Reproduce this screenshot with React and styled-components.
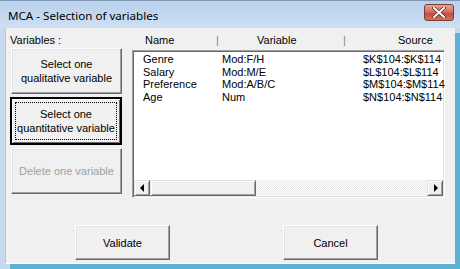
import React from 'react';
import styled, {createGlobalStyle} from 'styled-components';

const GlobalStyle = createGlobalStyle`
    html, body {
        margin: 0;
        padding: 0;
        background: #ffffff;
    }
    body {
        font-family: "Liberation Sans", Arial, sans-serif;
        font-size: 11px;
        color: #000;
    }
`

const rows = [
    {name: 'Genre', variable: 'Mod:F/H', source: '$K$104:$K$114'},
    {name: 'Salary', variable: 'Mod:M/E', source: '$L$104:$L$114'},
    {name: 'Preference', variable: 'Mod:A/B/C', source: '$M$104:$M$114'},
    {name: 'Age', variable: 'Num', source: '$N$104:$N$114'},
];

const CloseIcon = () => (
    <svg width="14" height="11" viewBox="0 0 14 11">
        <path d="M2 1 L12 10 M12 1 L2 10" stroke="#5a2a22" strokeWidth="3.6" strokeLinecap="square" />
        <path d="M2 1 L12 10 M12 1 L2 10" stroke="#ffffff" strokeWidth="2" strokeLinecap="square" />
    </svg>
);

const Arrow = ({dir}) => (
    <svg width="5" height="8" viewBox="0 0 5 8">
        {dir === 'left'
            ? <path d="M4 0 L0 4 L4 8 Z" fill="#000" />
            : <path d="M1 0 L5 4 L1 8 Z" fill="#000" />}
    </svg>
);

const App = () => {
    return(
        <Window>
            <GlobalStyle />
            <TitleBar>
                <Title>MCA - Selection of variables</Title>
                <CloseBtn><CloseIcon /></CloseBtn>
            </TitleBar>
            <Body>
                <Top>
                    <LeftColumn>
                        <Caption>Variables :</Caption>
                        <SideButton>Select one<br />qualitative variable</SideButton>
                        <SideButton focused>
                            <FocusRing>Select one<br />quantitative variable</FocusRing>
                        </SideButton>
                        <SideButton disabled>Delete one variable</SideButton>
                    </LeftColumn>
                    <RightColumn>
                        <HeaderRow>
                            <HeadCell width={71}>Name</HeadCell>
                            <Separator width={41}>|</Separator>
                            <HeadCell width={86}>Variable</HeadCell>
                            <Separator width={55}>|</Separator>
                            <HeadCell>Source</HeadCell>
                        </HeaderRow>
                        <ListBox>
                            <ListItems>
                                {rows.map((r) => (
                                    <Row key={r.name}>
                                        <Cell width={79}>{r.name}</Cell>
                                        <Cell width={141}>{r.variable}</Cell>
                                        <Cell>{r.source}</Cell>
                                    </Row>
                                ))}
                            </ListItems>
                            <ScrollBar>
                                <ArrowBtn><Arrow dir="left" /></ArrowBtn>
                                <Thumb />
                                <Track />
                                <ArrowBtn><Arrow dir="right" /></ArrowBtn>
                            </ScrollBar>
                        </ListBox>
                    </RightColumn>
                </Top>
                <Footer>
                    <DialogButton>Validate</DialogButton>
                    <DialogButton>Cancel</DialogButton>
                </Footer>
            </Body>
        </Window>
    );
}

export default App;

const Window = styled.div`
    width: 460px;
    height: 269px;
    display: flex;
    flex-direction: column;
    background: #c6d9ef;
    overflow: hidden;
`
const TitleBar = styled.div`
    height: 28px;
    display: flex;
    align-items: center;
    justify-content: space-between;
    padding: 0 6px 0 8px;
    background: linear-gradient(#b9d1ec, #cddff3);
    border-top: 1px solid #7f97b4;
    box-sizing: border-box;
`
const Title = styled.div`
    font-family: "Noto Sans", "Open Sans", sans-serif;
    font-size: 11.6px;
    color: #000;
    margin-top: 1px;
`
const CloseBtn = styled.div`
    width: 30px;
    height: 17px;
    margin-top: -4px;
    border: 1px solid #7a3b33;
    border-radius: 3px;
    background: linear-gradient(#e8a595, #d06a58 50%, #c14b38 51%, #d0725c);
    display: flex;
    align-items: center;
    justify-content: center;
    box-sizing: border-box;
`
const Body = styled.div`
    flex: 1;
    display: flex;
    flex-direction: column;
    background: #f0f0f0;
    margin: 0 5px 5px 5px;
    border-left: 1px solid #b8c8da;
    border-bottom: 1px solid #ffffff;
    box-shadow: 5px 5px 0 #5db1d5;
`
const Top = styled.div`
    display: flex;
    padding: 5px 0 0 5px;
`
const LeftColumn = styled.div`
    width: 112px;
    display: flex;
    flex-direction: column;
    gap: 3px;
`
const Caption = styled.div`
    height: 12px;
    line-height: 14px;
    margin-left: -1px;
`
const SideButton = styled.div`
    height: ${p => p.focused ? '48px' : '46px'};
    margin: ${p => p.focused ? '0 0 0 -1px' : '0'};
    width: ${p => p.focused ? '112px' : '111px'};
    box-sizing: border-box;
    display: flex;
    align-items: center;
    justify-content: center;
    text-align: center;
    line-height: 14px;
    color: ${p => p.disabled ? '#a0a0a0' : '#000'};
    background: #f0f0f0;
    border: 1px solid;
    border-color: #ffffff #696969 #696969 #ffffff;
    box-shadow: inset -1px -1px 0 #a0a0a0, inset 1px 1px 0 #e3e3e3;
    ${p => p.focused && `
        border: 2px solid;
        border-color: #000;
        box-shadow: inset 1px 1px 0 #fff, inset -1px -1px 0 #696969;
        padding: 3px;
    `}
`
const FocusRing = styled.div`
    width: 100%;
    height: 100%;
    display: flex;
    align-items: center;
    justify-content: center;
    border: 1px dotted #000;
    box-sizing: border-box;
`
const RightColumn = styled.div`
    margin-left: 9px;
    width: 313px;
    display: flex;
    flex-direction: column;
`
const HeaderRow = styled.div`
    height: 17px;
    display: flex;
    line-height: 14px;
    padding-left: 13px;
    white-space: nowrap;
`
const HeadCell = styled.div`
    width: ${p => p.width ? p.width + 'px' : 'auto'};
    flex: none;
`
const Separator = styled(HeadCell)`
    color: #808080;
`
const ListBox = styled.div`
    height: 148px;
    box-sizing: border-box;
    background: #fff;
    border: 1px solid;
    border-color: #a0a0a0 #ffffff #ffffff #a0a0a0;
    box-shadow: inset 1px 1px 0 #696969, inset -1px -1px 0 #e3e3e3;
    display: flex;
    flex-direction: column;
    padding: 1px;
`
const ListItems = styled.div`
    flex: 1;
    padding: 1px 0 0 9px;
`
const Row = styled.div`
    display: flex;
    height: 12.6px;
    line-height: 13px;
    white-space: nowrap;
`
const Cell = styled.div`
    width: ${p => p.width ? p.width + 'px' : 'auto'};
    flex: ${p => p.width ? 'none' : '1'};
`
const ScrollBar = styled.div`
    height: 16px;
    display: flex;
`
const ArrowBtn = styled.div`
    width: 16px;
    height: 16px;
    box-sizing: border-box;
    display: flex;
    align-items: center;
    justify-content: center;
    background: #f0f0f0;
    border: 1px solid;
    border-color: #e3e3e3 #696969 #696969 #e3e3e3;
    box-shadow: inset 1px 1px 0 #fff, inset -1px -1px 0 #a0a0a0;
`
const Thumb = styled.div`
    width: 106px;
    height: 16px;
    box-sizing: border-box;
    background: #f0f0f0;
    border: 1px solid;
    border-color: #e3e3e3 #696969 #696969 #e3e3e3;
    box-shadow: inset 1px 1px 0 #fff, inset -1px -1px 0 #a0a0a0;
`
const Track = styled.div`
    flex: 1;
    background-color: #f4f4f4;
    background-image: repeating-conic-gradient(#ffffff 0 25%, #e8e8e8 0 50%);
    background-size: 2px 2px;
`
const Footer = styled.div`
    display: flex;
    gap: 113px;
    padding: 27px 0 0 69px;
`
const DialogButton = styled.div`
    width: 95px;
    height: 35px;
    box-sizing: border-box;
    display: flex;
    align-items: center;
    justify-content: center;
    background: #f0f0f0;
    border: 1px solid;
    border-color: #ffffff #696969 #696969 #ffffff;
    box-shadow: inset -1px -1px 0 #a0a0a0, inset 1px 1px 0 #e3e3e3;
`
